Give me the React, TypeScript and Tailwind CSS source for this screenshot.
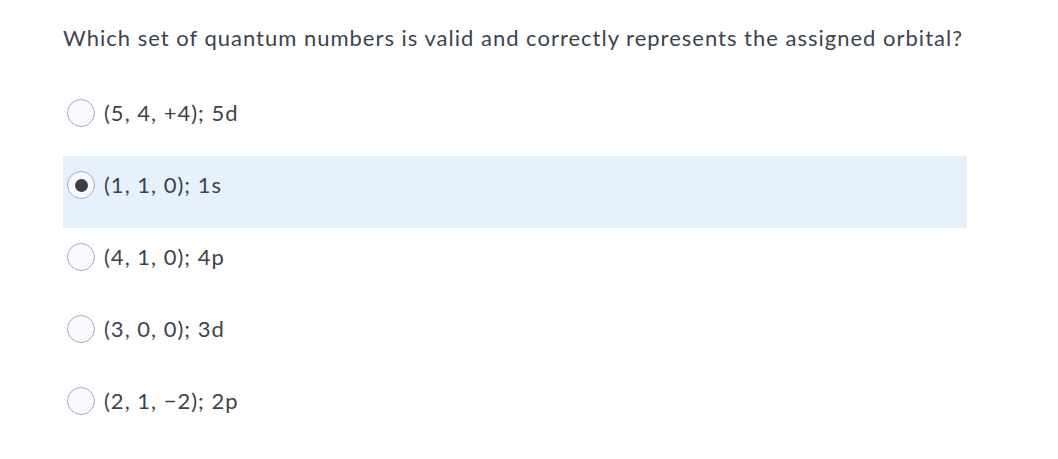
import React from 'react';

const options = [
  { label: '(5, 4, +4); 5d', selected: false },
  { label: '(1, 1, 0); 1s', selected: true },
  { label: '(4, 1, 0); 4p', selected: false },
  { label: '(3, 0, 0); 3d', selected: false },
  { label: '(2, 1, \u22122); 2p', selected: false },
];

const Radio: React.FC<{ checked: boolean }> = ({ checked }) => (
  <span className="w-[28px] h-[28px] rounded-full border border-[#a7acb2] bg-[#f8faff] flex items-center justify-center shrink-0">
    {checked && <span className="w-[13px] h-[13px] rounded-full bg-[#3a3f44]" />}
  </span>
);

export default function App() {
  return (
    <div
      className="min-h-screen bg-white text-[#3b444c] pl-[63px]"
      style={{ fontFamily: 'Lato, "Open Sans", sans-serif' }}
    >
      <p className="pt-[24px] text-[22px] leading-[28px] tracking-[1px] mb-[32px]">
        Which set of quantum numbers is valid and correctly represents the assigned orbital?
      </p>
      <div className="w-[904px]">
        {options.map((o) => (
          <div
            key={o.label}
            className={`h-[72px] flex items-start pt-[15px] pl-[4px] gap-[9px] ${o.selected ? 'bg-[#e6f1fb]' : ''}`}
          >
            <Radio checked={o.selected} />
            <span className="text-[22px] leading-[28px] tracking-[1px]">{o.label}</span>
          </div>
        ))}
      </div>
    </div>
  );
}
